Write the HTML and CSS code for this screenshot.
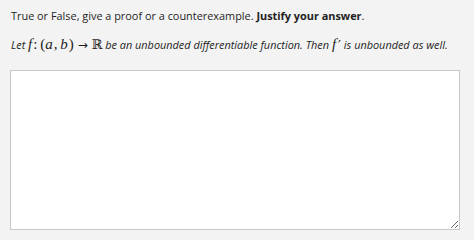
FILE: index.html
```html
<!DOCTYPE html>
<html>
<head>
<meta charset="utf-8">
<link rel="stylesheet" href="styles.css">
</head>
<body>
<div class="question">
  <p class="prompt">True or False, give a proof or a counterexample. <strong>Justify your answer</strong>.</p>
  <p class="statement"><em>Let <span class="math"><span class="mi">f</span><span class="mo">:</span> <span class="mo">(</span><span class="mi">a</span><span class="mo">,</span> <span class="mi">b</span><span class="mo">)</span> <span class="arrow">→</span> <span class="bb">ℝ</span></span> be an unbounded differentiable function. Then <span class="math"><span class="mi">f</span><span class="prime">′</span></span> is unbounded as well.</em></p>
  <textarea class="answer"></textarea>
</div>
</body>
</html>
```
FILE: styles.css
```css
html, body {
  margin: 0;
  padding: 0;
  background: #f3f3f3;
}
body {
  font-family: "Open Sans", "Noto Sans", sans-serif;
  font-size: 10.9px;
  color: #1e1e1e;
}
.question {
  padding: 7px 10px 0 11px;
  display: flex;
  flex-direction: column;
}
.prompt {
  margin: 0;
  line-height: 18px;
}
.prompt strong {
  font-weight: 700;
}
.statement {
  margin: 9px 0 0 0;
  line-height: 20px;
  white-space: nowrap;
}
.math {
  font-style: normal;
}
.mi {
  font-style: italic;
  font-family: "Liberation Serif", serif;
  font-size: 15px;
  margin-right: 1px;
}
.mo {
  font-family: "Liberation Serif", serif;
  font-size: 15px;
}
.arrow {
  font-family: "DejaVu Sans", sans-serif;
  font-size: 12px;
  margin: 0 1px;
}
.bb {
  font-family: "DejaVu Serif", serif;
  font-size: 13px;
}
.prime {
  font-family: "DejaVu Sans", sans-serif;
  font-size: 13px;
  margin-left: 1px;
}
.answer {
  margin: 15px 0 0 -1px;
  height: 160px;
  box-sizing: border-box;
  width: 450px;
  border: 1px solid #c8c8c8;
  background: #fff;
  resize: vertical;
  padding: 0;
}
```
